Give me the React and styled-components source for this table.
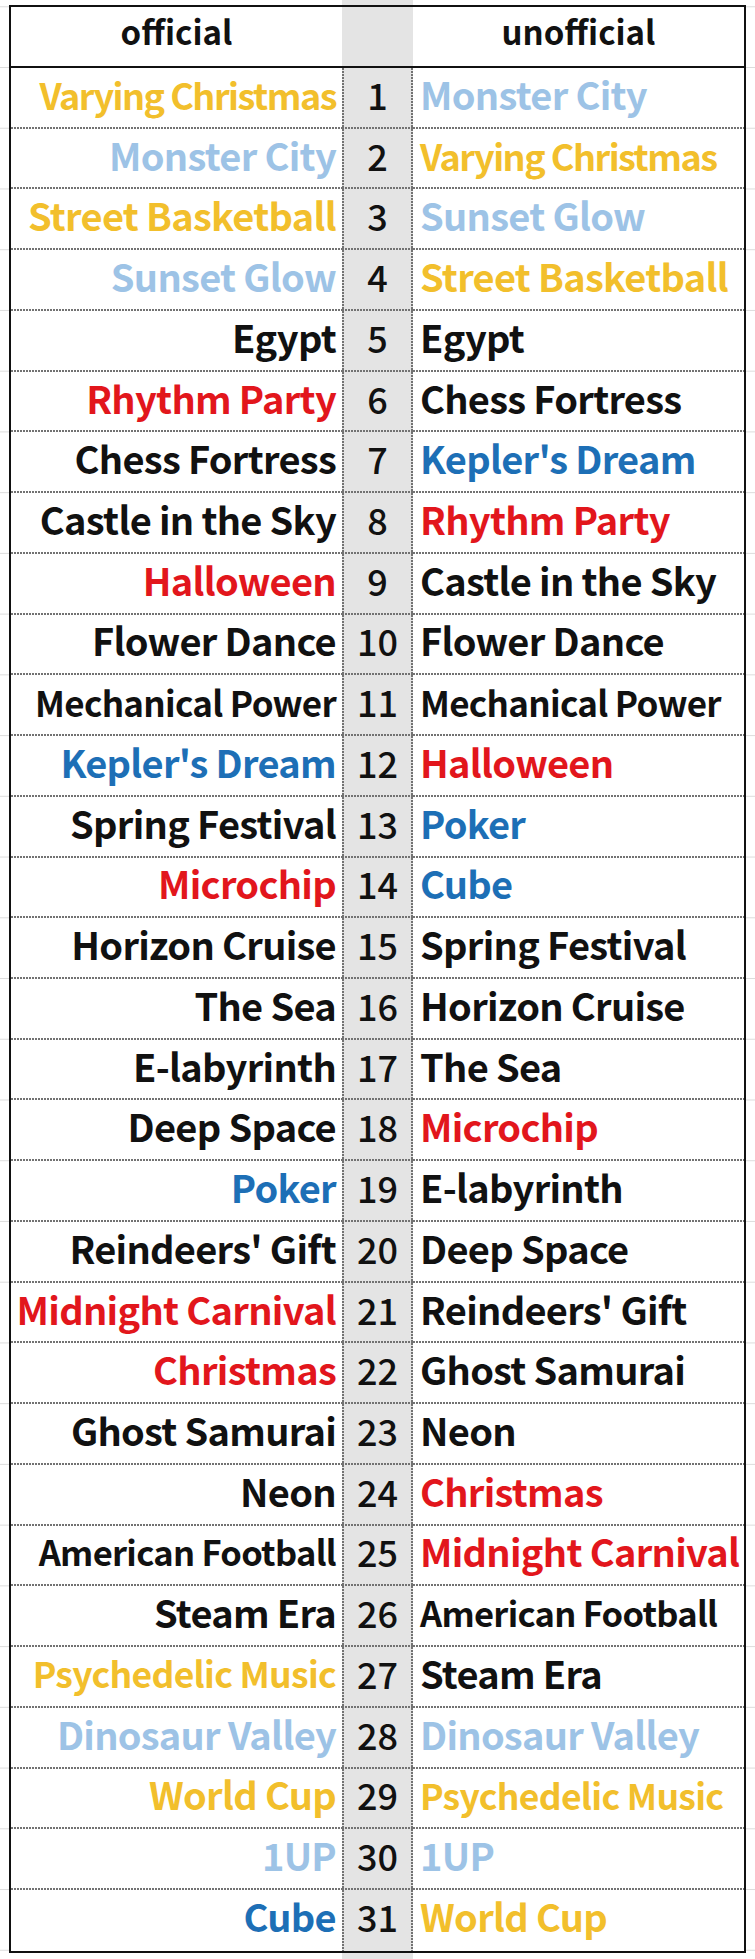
import React from "react";
import styled, { createGlobalStyle } from "styled-components";

const GlobalStyle = createGlobalStyle`
  html, body { margin: 0; padding: 0; background: #ffffff; }
  body { font-family: "Noto Sans CJK JP", "Noto Sans", sans-serif; }
  * { box-sizing: border-box; }
`;

const COLORS = {
  Y: "#f2bf2c",
  L: "#9dc3e6",
  B: "#1d6fb6",
  R: "#e2161c",
  K: "#111111",
};

const ROW_H = "calc(1883px / 31)";
const COLS = "331px 71px 331px";
const GRAY = "#e4e4e4";
const DOT = "#727272";
const hDots = `repeating-linear-gradient(to right, ${DOT} 0 2px, transparent 2px 3px)`;
const vDots = `repeating-linear-gradient(to bottom, ${DOT} 0 2px, transparent 2px 3px)`;

const Sheet = styled.div`
  width: 755px;
  height: 1959px;
  padding: 5px 9px 6px 9px;
  background:
    linear-gradient(to right, transparent 342px, ${GRAY} 342px, ${GRAY} 413px, transparent 413px),
    linear-gradient(#dcdcdc 0 1px, transparent 1px) 0 67px / 100% ${ROW_H} repeat-y,
    #ffffff;
`;

const Table = styled.div`
  border: 2px solid #111;
  background: #fff;
  display: flex;
  flex-direction: column;
`;

const HeaderRow = styled.div`
  display: grid;
  grid-template-columns: ${COLS};
  height: 61px;
  border-bottom: 2px solid #111;
`;

const HeaderCell = styled.div`
  display: flex;
  align-items: center;
  justify-content: center;
  padding-bottom: 10px;
  font-size: 33px;
  font-weight: 700;
  line-height: 1;
  color: #111;
  background: ${(p) => (p.$mid ? GRAY : "transparent")};
`;

const Row = styled.div`
  display: grid;
  grid-template-columns: ${COLS};
  height: ${ROW_H};
  background: ${(p) => (p.$last ? "none" : `${hDots} left bottom / 100% 2px no-repeat`)};
`;

const NameCell = styled.div`
  display: flex;
  align-items: center;
  justify-content: ${(p) => (p.$side === "left" ? "flex-end" : "flex-start")};
  padding: ${(p) => (p.$side === "left" ? "0 6px 9px 0" : "0 0 9px 7px")};
  font-size: ${(p) => p.$size || 38}px;
  font-weight: 700;
  letter-spacing: ${(p) => p.$spacing ?? -0.7}px;
  line-height: 1;
  white-space: nowrap;
  color: ${(p) => COLORS[p.$color]};
`;

const NumCell = styled.div`
  display: flex;
  align-items: center;
  justify-content: center;
  padding-bottom: 9px;
  font-size: 36px;
  font-weight: 500;
  line-height: 1;
  color: #111;
  background:
    ${vDots} left top / 2px 100% no-repeat,
    ${vDots} right top / 2px 100% no-repeat,
    ${(p) => (p.$last ? "" : `${hDots} left bottom / 100% 2px no-repeat,`)}
    ${GRAY};
`;

const VC = { size: 36, spacing: -1.5 };

const DATA = [
  [["Varying Christmas", "Y", VC], ["Monster City", "L"]],
  [["Monster City", "L"], ["Varying Christmas", "Y", VC]],
  [["Street Basketball", "Y"], ["Sunset Glow", "L"]],
  [["Sunset Glow", "L"], ["Street Basketball", "Y"]],
  [["Egypt", "K"], ["Egypt", "K"]],
  [["Rhythm Party", "R"], ["Chess Fortress", "K"]],
  [["Chess Fortress", "K"], ["Kepler's Dream", "B"]],
  [["Castle in the Sky", "K"], ["Rhythm Party", "R"]],
  [["Halloween", "R"], ["Castle in the Sky", "K"]],
  [["Flower Dance", "K"], ["Flower Dance", "K"]],
  [["Mechanical Power", "K", { size: 35 }], ["Mechanical Power", "K", { size: 35 }]],
  [["Kepler's Dream", "B"], ["Halloween", "R"]],
  [["Spring Festival", "K"], ["Poker", "B"]],
  [["Microchip", "R"], ["Cube", "B"]],
  [["Horizon Cruise", "K"], ["Spring Festival", "K"]],
  [["The Sea", "K"], ["Horizon Cruise", "K"]],
  [["E-labyrinth", "K"], ["The Sea", "K"]],
  [["Deep Space", "K"], ["Microchip", "R"]],
  [["Poker", "B"], ["E-labyrinth", "K"]],
  [["Reindeers' Gift", "K"], ["Deep Space", "K"]],
  [["Midnight Carnival", "R"], ["Reindeers' Gift", "K"]],
  [["Christmas", "R"], ["Ghost Samurai", "K"]],
  [["Ghost Samurai", "K"], ["Neon", "K"]],
  [["Neon", "K"], ["Christmas", "R"]],
  [["American Football", "K", { size: 34.5 }], ["Midnight Carnival", "R"]],
  [["Steam Era", "K"], ["American Football", "K", { size: 34.5 }]],
  [["Psychedelic Music", "Y", { size: 35.5 }], ["Steam Era", "K"]],
  [["Dinosaur Valley", "L"], ["Dinosaur Valley", "L"]],
  [["World Cup", "Y"], ["Psychedelic Music", "Y", { size: 35.5 }]],
  [["1UP", "L"], ["1UP", "L"]],
  [["Cube", "B"], ["World Cup", "Y"]],
];

function Name({ side, item }) {
  const [text, color, fit = {}] = item;
  return (
    <NameCell $side={side} $color={color} $size={fit.size} $spacing={fit.spacing}>
      {text}
    </NameCell>
  );
}

export default function App() {
  return (
    <>
      <GlobalStyle />
      <Sheet>
        <Table>
          <HeaderRow>
            <HeaderCell>official</HeaderCell>
            <HeaderCell $mid />
            <HeaderCell>unofficial</HeaderCell>
          </HeaderRow>
          {DATA.map(([l, r], i) => {
            const last = i === DATA.length - 1;
            return (
              <Row key={i} $last={last}>
                <Name side="left" item={l} />
                <NumCell $last={last}>{i + 1}</NumCell>
                <Name side="right" item={r} />
              </Row>
            );
          })}
        </Table>
      </Sheet>
    </>
  );
}
